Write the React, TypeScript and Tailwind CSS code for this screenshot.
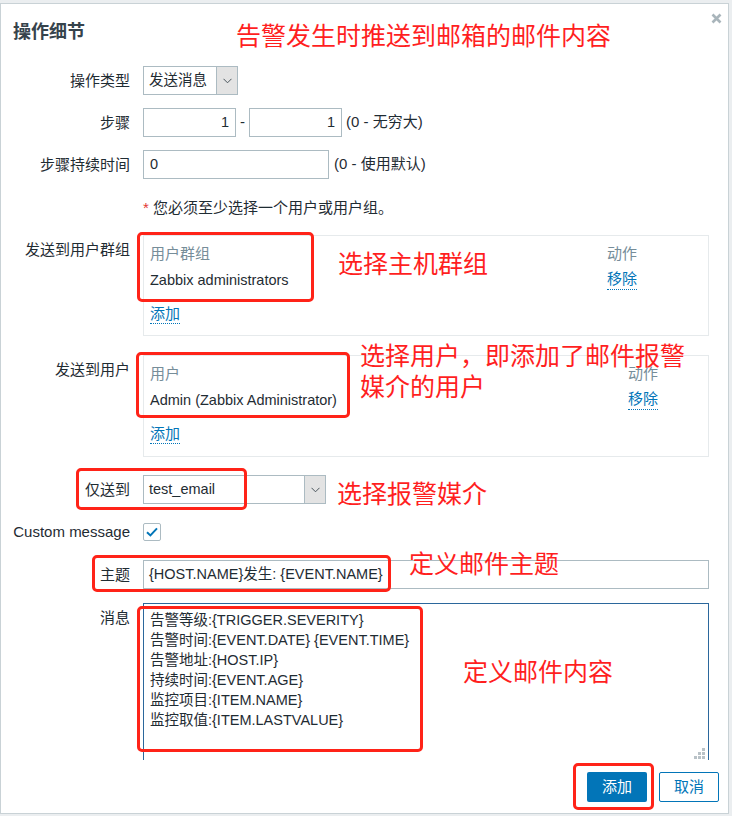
import type { ReactNode } from 'react';

const FONT = "font-['Liberation_Sans','Noto_Sans_CJK_SC',sans-serif]";
const NOTE = "font-['Noto_Sans_CJK_SC',sans-serif]";

function Label({ children }: { children: ReactNode }) {
    return <div className="w-[129px] shrink-0 text-right leading-[29px]">{children}</div>;
}

function Chevron() {
    return (
        <svg width="9" height="6" viewBox="0 0 9 6" fill="none">
            <path d="M0.5 0.8 L4.5 4.8 L8.5 0.8" stroke="#4a555c" strokeWidth="1" />
        </svg>
    );
}

function Select({ value, width }: { value: string; width: string }) {
    return (
        <div className={`flex h-[29px] border border-[#acbbc2] bg-white ${width}`}>
            <span className="flex-1 pl-[5px] text-[14.5px] leading-[27px]">{value}</span>
            <span className="flex w-[21px] items-center justify-center border-l border-[#acbbc2] bg-[#e3e3e3]">
                <Chevron />
            </span>
        </div>
    );
}

function LinkText({ children }: { children: ReactNode }) {
    return (
        <span className="inline-block border-b border-dotted border-[#0275b8] leading-[18px] text-[#0275b8]">
            {children}
        </span>
    );
}

function ListBox({ head, item, col, pb }: { head: string; item: string; col: string; pb: string }) {
    return (
        <div className={`w-[566px] border border-[#e6eaec] pl-[6px] pt-[8px] ${pb}`}>
            <div className="flex leading-[20px] text-[#768d99]">
                <span className={col}>{head}</span>
                <span>动作</span>
            </div>
            <div className="mt-[6px] flex leading-[20px]">
                <span className={`text-[14.5px] ${col}`}>{item}</span>
                <LinkText>移除</LinkText>
            </div>
            <div className="mt-[14px] leading-[20px]">
                <LinkText>添加</LinkText>
            </div>
        </div>
    );
}

function Note({ children, className }: { children: ReactNode; className: string }) {
    return (
        <div className={`absolute whitespace-nowrap text-[25px] leading-[31px] text-[#ff1f1f] ${NOTE} ${className}`}>
            {children}
        </div>
    );
}

function RedBox({ className }: { className: string }) {
    return <div className={`absolute rounded-[5px] border-[3px] border-[#ff2318] ${className}`} />;
}

const messageLines = [
    '告警等级:{TRIGGER.SEVERITY}',
    '告警时间:{EVENT.DATE} {EVENT.TIME}',
    '告警地址:{HOST.IP}',
    '持续时间:{EVENT.AGE}',
    '监控项目:{ITEM.NAME}',
    '监控取值:{ITEM.LASTVALUE}',
];

export default function App() {
    return (
        <div className={`relative h-[816px] w-[732px] overflow-hidden bg-[#ebeef0] pt-[3px] text-[15px] text-[#1f2c33] ${FONT}`}>
            <div className="h-[811px] w-[729px] border border-[#c9d2d6] bg-white">
                {/* header */}
                <div className="flex justify-between pl-[12px] pt-[16px]">
                    <h2 className="text-[18px] font-bold leading-[24px] text-[#36434c]">操作细节</h2>
                    <svg className="mr-[6px] mt-[-7px]" width="11" height="11" viewBox="0 0 11 11">
                        <path d="M1.5 1.5 L9.5 9.5 M9.5 1.5 L1.5 9.5" stroke="#a9b5bb" strokeWidth="2.6" />
                    </svg>
                </div>

                {/* operation type */}
                <div className="mt-[22px] flex">
                    <Label>操作类型</Label>
                    <div className="ml-[13px]">
                        <Select value="发送消息" width="w-[95px]" />
                    </div>
                </div>

                {/* steps */}
                <div className="mt-[13px] flex">
                    <Label>步骤</Label>
                    <div className="ml-[13px] flex items-center">
                        <div className="h-[29px] w-[93px] border border-[#acbbc2] pr-[6px] text-right text-[14.5px] leading-[27px]">1</div>
                        <span className="px-[4px]">-</span>
                        <div className="h-[29px] w-[93px] border border-[#acbbc2] pr-[6px] text-right text-[14.5px] leading-[27px]">1</div>
                        <span className="ml-[4px]">(0 - 无穷大)</span>
                    </div>
                </div>

                {/* step duration */}
                <div className="mt-[13px] flex">
                    <Label>步骤持续时间</Label>
                    <div className="ml-[13px] flex items-center">
                        <div className="h-[29px] w-[186px] border border-[#acbbc2] pl-[6px] text-[14.5px] leading-[27px]">0</div>
                        <span className="ml-[5px]">(0 - 使用默认)</span>
                    </div>
                </div>

                <div className="ml-[142px] mt-[19px] leading-[20px]">
                    <span className="text-[#e33734]">*</span> 您必须至少选择一个用户或用户组。
                </div>

                {/* user groups */}
                <div className="mt-[17px] flex">
                    <Label>发送到用户群组</Label>
                    <div className="ml-[13px]">
                        <ListBox head="用户群组" item="Zabbix administrators" col="w-[457px]" pb="pb-[11px]" />
                    </div>
                </div>

                {/* users */}
                <div className="mt-[19px] flex">
                    <Label>发送到用户</Label>
                    <div className="ml-[13px]">
                        <ListBox head="用户" item="Admin (Zabbix Administrator)" col="w-[478px]" pb="pb-[12px]" />
                    </div>
                </div>

                {/* media */}
                <div className="mt-[18px] flex">
                    <Label>仅送到</Label>
                    <div className="ml-[13px]">
                        <Select value="test_email" width="w-[183px]" />
                    </div>
                </div>

                {/* custom message */}
                <div className="mt-[19px] flex items-center">
                    <div className="w-[129px] shrink-0 text-right leading-[18px]">Custom message</div>
                    <div className="ml-[13px] flex h-[18px] w-[18px] items-center justify-center rounded-[2px] border border-[#acbbc2]">
                        <svg width="12" height="10" viewBox="0 0 12 10" fill="none">
                            <path d="M1 5.2 L4.4 8.4 L11 1.4" stroke="#0275b8" strokeWidth="2" />
                        </svg>
                    </div>
                </div>

                {/* subject */}
                <div className="mt-[19px] flex">
                    <Label>主题</Label>
                    <div className="ml-[13px] h-[29px] w-[566px] border border-[#acbbc2] pl-[5px] text-[14.5px] leading-[27px]">
                        {'{HOST.NAME}发生: {EVENT.NAME}'}
                    </div>
                </div>

                {/* message */}
                <div className="mt-[14px] flex">
                    <Label>消息</Label>
                    <div className="relative ml-[13px] h-[157px] w-[566px] border border-b-0 border-[#2b679c] pl-[6px] pt-[6px] text-[14.5px]">
                        {messageLines.map((line) => (
                            <div key={line} className="leading-[20px]">
                                {line}
                            </div>
                        ))}
                        <svg className="absolute bottom-[1px] right-[3px]" width="11" height="11" viewBox="0 0 11 11">
                            <g fill="#b9c2c7">
                                <rect x="8" y="0" width="3" height="3" />
                                <rect x="4" y="4" width="3" height="3" />
                                <rect x="8" y="4" width="3" height="3" />
                                <rect x="0" y="8" width="3" height="3" />
                                <rect x="4" y="8" width="3" height="3" />
                                <rect x="8" y="8" width="3" height="3" />
                            </g>
                        </svg>
                    </div>
                </div>

                {/* footer */}
                <div className="mt-[12px] flex justify-end gap-[12px] pr-[9px]">
                    <button className="h-[30px] w-[60px] rounded-[2px] bg-[#0275b8] text-white">添加</button>
                    <button className="h-[30px] w-[60px] rounded-[2px] border border-[#0275b8] bg-white text-[#0275b8]">取消</button>
                </div>
            </div>

            {/* annotations */}
            <Note className="left-[236px] top-[19px]">告警发生时推送到邮箱的邮件内容</Note>
            <Note className="left-[338px] top-[247px]">选择主机群组</Note>
            <Note className="left-[360px] top-[339px]">
                选择用户，即添加了邮件报警
                <br />
                媒介的用户
            </Note>
            <Note className="left-[337px] top-[477px]">选择报警媒介</Note>
            <Note className="left-[409px] top-[547px]">定义邮件主题</Note>
            <Note className="left-[463px] top-[655px]">定义邮件内容</Note>

            <RedBox className="left-[137px] top-[232px] h-[70px] w-[177px]" />
            <RedBox className="left-[136px] top-[352px] h-[66px] w-[214px]" />
            <RedBox className="left-[76px] top-[468px] h-[42px] w-[171px]" />
            <RedBox className="left-[92px] top-[555px] h-[37px] w-[299px]" />
            <RedBox className="left-[137px] top-[606px] h-[146px] w-[286px]" />
            <RedBox className="left-[573px] top-[763px] h-[47px] w-[81px]" />
        </div>
    );
}
